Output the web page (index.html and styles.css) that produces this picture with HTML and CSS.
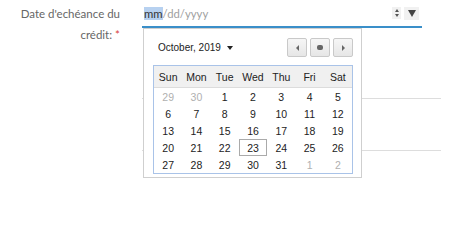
FILE: index.html
```html
<!DOCTYPE html>
<html lang="fr">
<head>
<meta charset="utf-8">
<title>Date</title>
<link rel="stylesheet" href="styles.css">
</head>
<body>
<div class="form">
  <div class="row">
    <label class="lbl">Date d'echéance du crédit:<span class="req">*</span></label>
    <div class="field">
      <div class="date-input">
        <span class="seg sel">mm</span><span class="seg">/dd/yyyy</span>
        <span class="ctrls">
          <span class="spin"><i class="up"></i><i class="down"></i></span>
          <span class="drop"><i></i></span>
        </span>
      </div>
      <div class="picker">
        <div class="phead">
          <span class="month">October, 2019 <i class="caret"></i></span>
          <div class="nav">
            <button class="nb"><i class="tl"></i></button>
            <button class="nb"><i class="dot"></i></button>
            <button class="nb"><i class="tr"></i></button>
          </div>
        </div>
        <table class="cal">
          <thead>
            <tr><th>Sun</th><th>Mon</th><th>Tue</th><th>Wed</th><th>Thu</th><th>Fri</th><th>Sat</th></tr>
          </thead>
          <tbody>
            <tr><td class="o">29</td><td class="o">30</td><td>1</td><td>2</td><td>3</td><td>4</td><td>5</td></tr>
            <tr><td>6</td><td>7</td><td>8</td><td>9</td><td>10</td><td>11</td><td>12</td></tr>
            <tr><td>13</td><td>14</td><td>15</td><td>16</td><td>17</td><td>18</td><td>19</td></tr>
            <tr><td>20</td><td>21</td><td>22</td><td class="today">23</td><td>24</td><td>25</td><td>26</td></tr>
            <tr><td>27</td><td>28</td><td>29</td><td>30</td><td>31</td><td class="o">1</td><td class="o">2</td></tr>
          </tbody>
        </table>
      </div>
    </div>
  </div>
  <div class="row bg-row first"><div class="lbl"></div><div class="line"></div></div>
  <div class="row bg-row second"><div class="lbl"></div><div class="line"></div></div>
</div>
</body>
</html>
```
FILE: styles.css
```css
html, body {
  margin: 0;
  padding: 0;
  background: #fff;
}
.form {
  width: 474px;
  height: 223px;
  overflow: hidden;
}
.row {
  display: flex;
  align-items: flex-start;
}
.lbl {
  width: 120px;
  flex: none;
  text-align: right;
  font-family: Lato, "Open Sans", sans-serif;
  font-size: 11.5px;
  line-height: 21px;
  color: #666;
  padding-top: 3px;
  padding-left: 14px;
  box-sizing: border-box;
}
.req {
  color: #d9413a;
  font-size: 11.5px;
  margin-left: 3px;
}
.field {
  position: relative;
  margin-left: 22px;
}
.date-input {
  width: 278px;
  height: 26px;
  border-bottom: 2px solid #3a8fc9;
  display: flex;
  align-items: center;
  font-family: Lato, "Open Sans", sans-serif;
  font-size: 11.3px;
  color: #a0a0a0;
  padding-left: 2px;
  box-sizing: content-box;
}
.seg.sel {
  background: #b7d1f0;
  color: #333;
}
.ctrls {
  margin-left: auto;
  display: flex;
  align-items: center;
  gap: 3px;
  margin-right: 3px;
}
.spin {
  width: 9px;
  height: 12px;
  background: #f1f1f1;
  display: flex;
  flex-direction: column;
  align-items: center;
  justify-content: center;
  gap: 2px;
}
.spin i {
  display: block;
  width: 0;
  height: 0;
  border-left: 2.5px solid transparent;
  border-right: 2.5px solid transparent;
}
.spin .up { border-bottom: 3px solid #555; }
.spin .down { border-top: 3px solid #555; }
.drop {
  width: 15px;
  height: 13px;
  background: #f1f1f1;
  display: flex;
  align-items: center;
  justify-content: center;
}
.drop i {
  display: block;
  width: 0;
  height: 0;
  border-left: 4.5px solid transparent;
  border-right: 4.5px solid transparent;
  border-top: 7px solid #444;
}
.picker {
  position: absolute;
  left: 1px;
  top: 28px;
  width: 219px;
  height: 150px;
  box-sizing: border-box;
  background: #fff;
  border: 1px solid #cfcfcf;
  padding: 9px 8px 0 9px;
  font-family: "Liberation Sans", Arial, sans-serif;
  font-size: 10px;
  color: #222;
  z-index: 2;
}
.phead {
  display: flex;
  align-items: center;
  justify-content: space-between;
  height: 19px;
  margin-bottom: 8px;
}
.month {
  padding-left: 5px;
  font-size: 10px;
  color: #222;
  display: flex;
  align-items: center;
  gap: 6px;
}
.caret {
  display: block;
  width: 0;
  height: 0;
  border-left: 3px solid transparent;
  border-right: 3px solid transparent;
  border-top: 4px solid #222;
}
.nav {
  display: flex;
  gap: 3px;
}
.nb {
  width: 20px;
  height: 19px;
  padding: 0;
  margin: 0;
  border: 1px solid #c9c9c9;
  border-radius: 2px;
  background: linear-gradient(#f6f6f6, #e6e6e6);
  display: flex;
  align-items: center;
  justify-content: center;
}
.nb i { display: block; }
.nb .tl {
  width: 0; height: 0;
  border-top: 3px solid transparent;
  border-bottom: 3px solid transparent;
  border-right: 3px solid #666;
}
.nb .tr {
  width: 0; height: 0;
  border-top: 3px solid transparent;
  border-bottom: 3px solid transparent;
  border-left: 3px solid #666;
}
.nb .dot {
  width: 6px;
  height: 5px;
  border-radius: 2px;
  background: #666;
}
.cal {
  width: 200px;
  border-collapse: separate;
  border-spacing: 0;
  border: 1px solid #a9c3e8;
  table-layout: fixed;
  font-size: 10.5px;
}
.cal th {
  font-weight: normal;
  background: #f0f0f0;
  border-bottom: 1px solid #dcdcdc;
  height: 21px;
  padding: 0;
  text-align: center;
  color: #222;
}
.cal td {
  height: 17px;
  padding: 0;
  text-align: center;
  color: #222;
  box-sizing: border-box;
}
.cal td.o {
  color: #b0b0b0;
}
.cal td.today {
  border: 1px solid #aaa;
}
.bg-row {
  height: 0;
}
.bg-row .line {
  margin-left: 22px;
  width: 299px;
  height: 0;
  border-bottom: 1px solid #ddd;
}
.bg-row.first { margin-top: 53px; }
.bg-row.second { margin-top: 52px; }
```
